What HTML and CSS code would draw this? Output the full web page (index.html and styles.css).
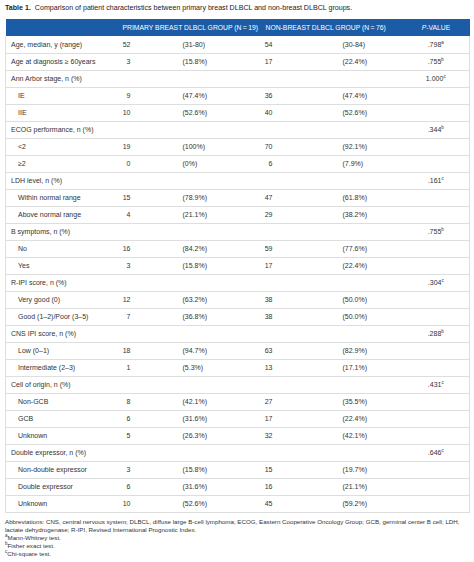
FILE: index.html
```html
<!DOCTYPE html>
<html>
<head>
<meta charset="utf-8">
<link rel="stylesheet" href="styles.css">
</head>
<body>
<div class="page">
  <p class="caption"><b>Table 1.</b>&nbsp; Comparison of patient characteristics between primary breast DLBCL and non-breast DLBCL groups.</p>
  <table class="tbl">
    <colgroup>
      <col class="c-label"><col class="c-n1"><col class="c-p1"><col class="c-n2"><col class="c-p2"><col class="c-pv">
    </colgroup>
    <thead>
      <tr>
        <th></th>
        <th colspan="2" class="h-grp1">PRIMARY BREAST DLBCL GROUP (N&#8201;=&#8201;19)</th>
        <th colspan="2" class="h-grp2">NON-BREAST DLBCL GROUP (N&#8201;=&#8201;76)</th>
        <th class="h-pv"><i>P</i>-VALUE</th>
      </tr>
    </thead>
    <tbody>
      <tr><td class="lbl">Age, median, y (range)</td><td class="n1">52</td><td class="p1">(31-80)</td><td class="n2">54</td><td class="p2">(30-84)</td><td class="pv">.798<sup>a</sup></td></tr>
      <tr><td class="lbl">Age at diagnosis &#8805; 60years</td><td class="n1">3</td><td class="p1">(15.8%)</td><td class="n2">17</td><td class="p2">(22.4%)</td><td class="pv">.755<sup>b</sup></td></tr>
      <tr><td class="lbl">Ann Arbor stage, n (%)</td><td class="n1"></td><td class="p1"></td><td class="n2"></td><td class="p2"></td><td class="pv">1.000<sup>c</sup></td></tr>
      <tr><td class="lbl sub">IE</td><td class="n1">9</td><td class="p1">(47.4%)</td><td class="n2">36</td><td class="p2">(47.4%)</td><td class="pv"></td></tr>
      <tr><td class="lbl sub">IIE</td><td class="n1">10</td><td class="p1">(52.6%)</td><td class="n2">40</td><td class="p2">(52.6%)</td><td class="pv"></td></tr>
      <tr><td class="lbl">ECOG performance, n (%)</td><td class="n1"></td><td class="p1"></td><td class="n2"></td><td class="p2"></td><td class="pv">.344<sup>b</sup></td></tr>
      <tr><td class="lbl sub">&lt;2</td><td class="n1">19</td><td class="p1">(100%)</td><td class="n2">70</td><td class="p2">(92.1%)</td><td class="pv"></td></tr>
      <tr><td class="lbl sub">&#8805;2</td><td class="n1">0</td><td class="p1">(0%)</td><td class="n2">6</td><td class="p2">(7.9%)</td><td class="pv"></td></tr>
      <tr><td class="lbl">LDH level, n (%)</td><td class="n1"></td><td class="p1"></td><td class="n2"></td><td class="p2"></td><td class="pv">.161<sup>c</sup></td></tr>
      <tr><td class="lbl sub">Within normal range</td><td class="n1">15</td><td class="p1">(78.9%)</td><td class="n2">47</td><td class="p2">(61.8%)</td><td class="pv"></td></tr>
      <tr><td class="lbl sub">Above normal range</td><td class="n1">4</td><td class="p1">(21.1%)</td><td class="n2">29</td><td class="p2">(38.2%)</td><td class="pv"></td></tr>
      <tr><td class="lbl">B symptoms, n (%)</td><td class="n1"></td><td class="p1"></td><td class="n2"></td><td class="p2"></td><td class="pv">.755<sup>b</sup></td></tr>
      <tr><td class="lbl sub">No</td><td class="n1">16</td><td class="p1">(84.2%)</td><td class="n2">59</td><td class="p2">(77.6%)</td><td class="pv"></td></tr>
      <tr><td class="lbl sub">Yes</td><td class="n1">3</td><td class="p1">(15.8%)</td><td class="n2">17</td><td class="p2">(22.4%)</td><td class="pv"></td></tr>
      <tr><td class="lbl">R-IPI score, n (%)</td><td class="n1"></td><td class="p1"></td><td class="n2"></td><td class="p2"></td><td class="pv">.304<sup>c</sup></td></tr>
      <tr><td class="lbl sub">Very good (0)</td><td class="n1">12</td><td class="p1">(63.2%)</td><td class="n2">38</td><td class="p2">(50.0%)</td><td class="pv"></td></tr>
      <tr><td class="lbl sub">Good (1&#8211;2)/Poor (3&#8211;5)</td><td class="n1">7</td><td class="p1">(36.8%)</td><td class="n2">38</td><td class="p2">(50.0%)</td><td class="pv"></td></tr>
      <tr><td class="lbl">CNS IPI score, n (%)</td><td class="n1"></td><td class="p1"></td><td class="n2"></td><td class="p2"></td><td class="pv">.288<sup>b</sup></td></tr>
      <tr><td class="lbl sub">Low (0&#8211;1)</td><td class="n1">18</td><td class="p1">(94.7%)</td><td class="n2">63</td><td class="p2">(82.9%)</td><td class="pv"></td></tr>
      <tr><td class="lbl sub">Intermediate (2&#8211;3)</td><td class="n1">1</td><td class="p1">(5.3%)</td><td class="n2">13</td><td class="p2">(17.1%)</td><td class="pv"></td></tr>
      <tr><td class="lbl">Cell of origin, n (%)</td><td class="n1"></td><td class="p1"></td><td class="n2"></td><td class="p2"></td><td class="pv">.431<sup>c</sup></td></tr>
      <tr><td class="lbl sub">Non-GCB</td><td class="n1">8</td><td class="p1">(42.1%)</td><td class="n2">27</td><td class="p2">(35.5%)</td><td class="pv"></td></tr>
      <tr><td class="lbl sub">GCB</td><td class="n1">6</td><td class="p1">(31.6%)</td><td class="n2">17</td><td class="p2">(22.4%)</td><td class="pv"></td></tr>
      <tr><td class="lbl sub">Unknown</td><td class="n1">5</td><td class="p1">(26.3%)</td><td class="n2">32</td><td class="p2">(42.1%)</td><td class="pv"></td></tr>
      <tr><td class="lbl">Double expressor, n (%)</td><td class="n1"></td><td class="p1"></td><td class="n2"></td><td class="p2"></td><td class="pv">.646<sup>c</sup></td></tr>
      <tr><td class="lbl sub">Non-double expressor</td><td class="n1">3</td><td class="p1">(15.8%)</td><td class="n2">15</td><td class="p2">(19.7%)</td><td class="pv"></td></tr>
      <tr><td class="lbl sub">Double expressor</td><td class="n1">6</td><td class="p1">(31.6%)</td><td class="n2">16</td><td class="p2">(21.1%)</td><td class="pv"></td></tr>
      <tr><td class="lbl sub">Unknown</td><td class="n1">10</td><td class="p1">(52.6%)</td><td class="n2">45</td><td class="p2">(59.2%)</td><td class="pv"></td></tr>
    </tbody>
  </table>
  <div class="notes">
    <p>Abbreviations: CNS, central nervous system; DLBCL, diffuse large B-cell lymphoma; ECOG, Eastern Cooperative Oncology Group; GCB, germinal center B cell; LDH, lactate dehydrogenase; R-IPI, Revised International Prognostic Index.</p>
    <p><sup>a</sup>Mann-Whitney test.</p>
    <p><sup>b</sup>Fisher exact test.</p>
    <p><sup>c</sup>Chi-square test.</p>
  </div>
</div>
</body>
</html>
```
FILE: styles.css
```css
html, body {
  margin: 0;
  padding: 0;
  background: #ffffff;
}
.page {
  padding: 3px 5px 0 5px;
  font-family: "Liberation Sans", Arial, sans-serif;
  font-size: 7px;
  color: #333333;
}
.caption {
  margin: 0;
  line-height: 10px;
  height: 10px;
  color: #222222;
  white-space: nowrap;
  font-size: 7.1px;
}
.caption b {
  font-weight: bold;
}
.tbl {
  margin-top: 6px;
  width: 464px;
  border-collapse: collapse;
  table-layout: fixed;
}
.c-label { width: 113px; }
.c-n1 { width: 22px; }
.c-p1 { width: 118px; }
.c-n2 { width: 22px; }
.c-p2 { width: 120px; }
.c-pv { width: 69px; }

.tbl thead th {
  background: #1c5ca6;
  color: #ffffff;
  font-weight: normal;
  font-size: 6.8px;
  height: 17px;
  padding: 0;
  text-align: left;
  vertical-align: middle;
  white-space: nowrap;
}
.tbl .h-grp1 { padding-left: 4px; }
.tbl .h-grp2 { padding-left: 7px; }
.tbl .h-pv { text-align: center; padding-left: 2px; }

.tbl tbody td {
  height: 17px;
  padding: 0;
  border-bottom: 1px solid #dedede;
  vertical-align: middle;
  white-space: nowrap;
  box-sizing: border-box;
}
.tbl tbody tr td:first-child { border-left: 1px solid #dedede; }
.tbl tbody tr td:last-child { border-right: 1px solid #dedede; }

.lbl { padding-left: 5px !important; }
.lbl.sub { padding-left: 12px !important; }
.n1 { text-align: right; padding-right: 10px !important; }
.p1 { padding-left: 42px !important; }
.n2 { text-align: right; padding-right: 8px !important; }
.p2 { padding-left: 62px !important; }
.pv { text-align: center; padding-left: 2px !important; }

sup {
  font-size: 4.5px;
  vertical-align: top;
  line-height: 1;
}

.notes {
  margin-top: 5px;
  width: 466px;
  font-size: 6.2px;
}
.notes p {
  margin: 0;
  line-height: 8px;
}
```
